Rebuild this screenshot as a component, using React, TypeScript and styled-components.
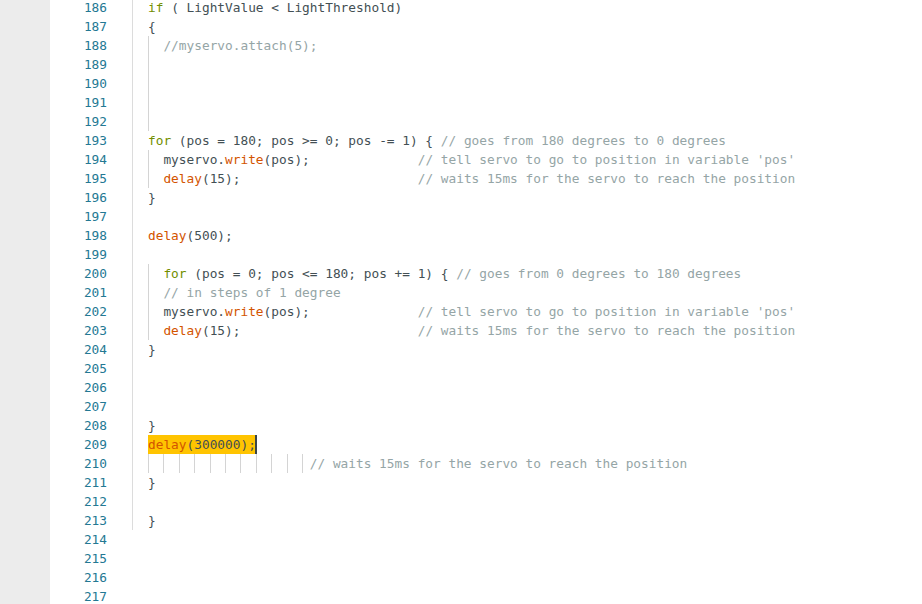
import React from "react";
import styled, { createGlobalStyle } from "styled-components";

const Global = createGlobalStyle`
  html, body { margin: 0; padding: 0; background: #ffffff; overflow: hidden; }
  #root { width: 922px; height: 604px; overflow: hidden; }
`;

const Page = styled.div`
  display: flex;
  width: 922px;
  height: 604px;
  overflow: hidden;
  background: #ffffff;
`;

const SideBand = styled.div`
  width: 50px;
  flex: none;
  background: #ececec;
`;

const Editor = styled.div`
  flex: 1;
  display: flex;
  flex-direction: column;
  margin-top: -2px;
  font-family: "DejaVu Sans Mono", "Liberation Mono", monospace;
  font-size: 12.8px;
  line-height: 19px;
  color: #434f54;
`;

const Row = styled.div`
  display: flex;
  height: 19px;
  flex: none;
`;

const LineNo = styled.div`
  width: 57px;
  padding-right: 25px;
  text-align: right;
  color: #237893;
  flex: none;
`;

const Code = styled.div<{ $ruled: boolean }>`
  flex: 1;
  border-left: 1px solid ${(p) => (p.$ruled ? "#dcdcdc" : "transparent")};
  padding-left: 15px;
  white-space: pre;
  display: flex;
  align-items: stretch;
`;

const Guide = styled.span<{ $w: number }>`
  display: inline-block;
  box-sizing: border-box;
  width: ${(p) => p.$w}ch;
  height: 19px;
  border-left: 1px solid #d4d4d4;
  flex: none;
`;

const Tok = styled.span<{ $kind: string }>`
  color: ${(p) =>
    p.$kind === "kw"
      ? "#728e00"
      : p.$kind === "fn"
      ? "#d35400"
      : p.$kind === "cm"
      ? "#95a5a6"
      : "#434f54"};
`;

const Highlight = styled.span`
  display: inline-block;
  height: 19px;
  background: #ffc400;
`;

const Caret = styled.span`
  display: inline-block;
  width: 2px;
  height: 19px;
  background: #3a464b;
  margin-left: -1px;
`;

type Line = {
  n: number;
  guides?: number[]; // widths in ch of each guided indent span
  text?: string;
  hl?: boolean;
};

const S = (k: number) => " ".repeat(k);

const lines: Line[] = [
  { n: 186, text: "if ( LightValue < LightThreshold)" },
  { n: 187, text: "{" },
  { n: 188, guides: [2], text: "//myservo.attach(5);" },
  { n: 189, guides: [2] },
  { n: 190, guides: [2] },
  { n: 191, guides: [2] },
  { n: 192, guides: [2] },
  { n: 193, text: "for (pos = 180; pos >= 0; pos -= 1) { // goes from 180 degrees to 0 degrees" },
  { n: 194, guides: [2], text: "myservo.write(pos);" + S(14) + "// tell servo to go to position in variable 'pos'" },
  { n: 195, guides: [2], text: "delay(15);" + S(23) + "// waits 15ms for the servo to reach the position" },
  { n: 196, text: "}" },
  { n: 197 },
  { n: 198, text: "delay(500);" },
  { n: 199 },
  { n: 200, guides: [2], text: "for (pos = 0; pos <= 180; pos += 1) { // goes from 0 degrees to 180 degrees" },
  { n: 201, guides: [2], text: "// in steps of 1 degree" },
  { n: 202, guides: [2], text: "myservo.write(pos);" + S(14) + "// tell servo to go to position in variable 'pos'" },
  { n: 203, guides: [2], text: "delay(15);" + S(23) + "// waits 15ms for the servo to reach the position" },
  { n: 204, text: "}" },
  { n: 205 },
  { n: 206 },
  { n: 207 },
  { n: 208, text: "}" },
  { n: 209, text: "delay(300000);", hl: true },
  { n: 210, guides: [2, 2, 2, 2, 2, 2, 2, 2, 2, 2, 1], text: "// waits 15ms for the servo to reach the position" },
  { n: 211, text: "}" },
  { n: 212 },
  { n: 213, text: "}" },
  { n: 214 },
  { n: 215 },
  { n: 216 },
  { n: 217 },
];

function tokenize(src: string): { k: string; t: string }[] {
  const out: { k: string; t: string }[] = [];
  const ci = src.indexOf("//");
  const code = ci >= 0 ? src.slice(0, ci) : src;
  const comment = ci >= 0 ? src.slice(ci) : "";
  const re = /(\b(?:if|for)\b)|(\b(?:write|delay)\b)/g;
  let last = 0;
  let m: RegExpExecArray | null;
  while ((m = re.exec(code))) {
    if (m.index > last) out.push({ k: "tx", t: code.slice(last, m.index) });
    out.push({ k: m[1] ? "kw" : "fn", t: m[0] });
    last = m.index + m[0].length;
  }
  if (last < code.length) out.push({ k: "tx", t: code.slice(last) });
  if (comment) out.push({ k: "cm", t: comment });
  return out;
}

const Tokens: React.FC<{ text: string }> = ({ text }) => (
  <>
    {tokenize(text).map((tk, i) => (
      <Tok key={i} $kind={tk.k}>
        {tk.t}
      </Tok>
    ))}
  </>
);

export default function App() {
  return (
    <>
      <Global />
      <Page>
        <SideBand />
        <Editor>
          {lines.map((l) => (
            <Row key={l.n}>
              <LineNo>{l.n}</LineNo>
              <Code $ruled={l.n <= 213}>
                {(l.guides || []).map((w, i) => (
                  <Guide key={i} $w={w} />
                ))}
                {l.text &&
                  (l.hl ? (
                    <>
                      <Highlight>
                        <Tokens text={l.text} />
                      </Highlight>
                      <Caret />
                    </>
                  ) : (
                    <span>
                      <Tokens text={l.text} />
                    </span>
                  ))}
              </Code>
            </Row>
          ))}
        </Editor>
      </Page>
    </>
  );
}
